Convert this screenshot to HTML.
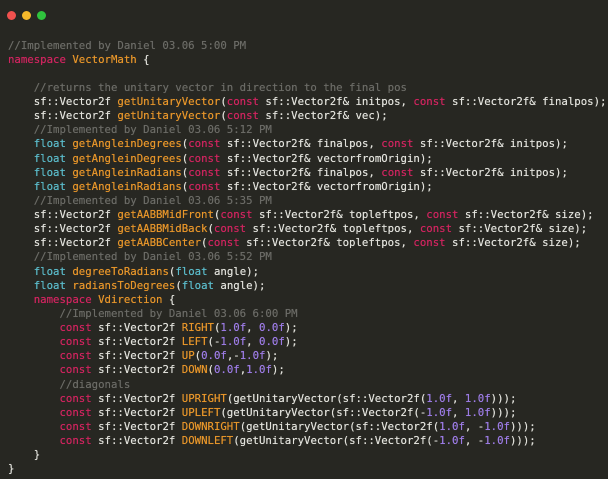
<!DOCTYPE html>
<html><head><meta charset="utf-8"><style>
html,body{margin:0;padding:0;width:608px;height:479px;overflow:hidden;background:#272722;}
.dot{position:absolute;top:10.5px;width:9px;height:9px;border-radius:50%;}
pre{position:absolute;left:8px;top:38.5px;margin:0;font-family:"DejaVu Sans Mono",monospace;font-size:10.7px;line-height:14.13px;color:#e2e2dc;white-space:pre;text-shadow:0 0 0.4px currentColor;}
.c{color:#6b6b66}.k{color:#d0245f}.f{color:#e8962a}.t{color:#5bbccb}.n{color:#9d7ce6}
</style></head><body>
<div class="dot" style="left:6.5px;background:#f0514e"></div>
<div class="dot" style="left:21.5px;background:#f6b92b"></div>
<div class="dot" style="left:36.5px;background:#2fc23d"></div>
<pre><span class="c">//Implemented by Daniel 03.06 5:00 PM</span>
<span class="k">namespace</span> <span class="f">VectorMath</span> {

    <span class="c">//returns the unitary vector in direction to the final pos</span>
    sf::Vector2f <span class="f">getUnitaryVector</span>(<span class="k">const</span> sf::Vector2f&amp; initpos, <span class="k">const</span> sf::Vector2f&amp; finalpos);
    sf::Vector2f <span class="f">getUnitaryVector</span>(<span class="k">const</span> sf::Vector2f&amp; vec);
    <span class="c">//Implemented by Daniel 03.06 5:12 PM</span>
    <span class="t">float</span> <span class="f">getAngleinDegrees</span>(<span class="k">const</span> sf::Vector2f&amp; finalpos, <span class="k">const</span> sf::Vector2f&amp; initpos);
    <span class="t">float</span> <span class="f">getAngleinDegrees</span>(<span class="k">const</span> sf::Vector2f&amp; vectorfromOrigin);
    <span class="t">float</span> <span class="f">getAngleinRadians</span>(<span class="k">const</span> sf::Vector2f&amp; finalpos, <span class="k">const</span> sf::Vector2f&amp; initpos);
    <span class="t">float</span> <span class="f">getAngleinRadians</span>(<span class="k">const</span> sf::Vector2f&amp; vectorfromOrigin);
    <span class="c">//Implemented by Daniel 03.06 5:35 PM</span>
    sf::Vector2f <span class="f">getAABBMidFront</span>(<span class="k">const</span> sf::Vector2f&amp; topleftpos, <span class="k">const</span> sf::Vector2f&amp; size);
    sf::Vector2f <span class="f">getAABBMidBack</span>(<span class="k">const</span> sf::Vector2f&amp; topleftpos, <span class="k">const</span> sf::Vector2f&amp; size);
    sf::Vector2f <span class="f">getAABBCenter</span>(<span class="k">const</span> sf::Vector2f&amp; topleftpos, <span class="k">const</span> sf::Vector2f&amp; size);
    <span class="c">//Implemented by Daniel 03.06 5:52 PM</span>
    <span class="t">float</span> <span class="f">degreeToRadians</span>(<span class="t">float</span> angle);
    <span class="t">float</span> <span class="f">radiansToDegrees</span>(<span class="t">float</span> angle);
    <span class="k">namespace</span> <span class="f">Vdirection</span> {
        <span class="c">//Implemented by Daniel 03.06 6:00 PM</span>
        <span class="k">const</span> sf::Vector2f <span class="f">RIGHT</span>(<span class="n">1.0f</span>, <span class="n">0.0f</span>);
        <span class="k">const</span> sf::Vector2f <span class="f">LEFT</span>(-<span class="n">1.0f</span>, <span class="n">0.0f</span>);
        <span class="k">const</span> sf::Vector2f <span class="f">UP</span>(<span class="n">0.0f</span>,-<span class="n">1.0f</span>);
        <span class="k">const</span> sf::Vector2f <span class="f">DOWN</span>(<span class="n">0.0f</span>,<span class="n">1.0f</span>);
        <span class="c">//diagonals</span>
        <span class="k">const</span> sf::Vector2f <span class="f">UPRIGHT</span>(getUnitaryVector(sf::Vector2f(<span class="n">1.0f</span>, <span class="n">1.0f</span>)));
        <span class="k">const</span> sf::Vector2f <span class="f">UPLEFT</span>(getUnitaryVector(sf::Vector2f(-<span class="n">1.0f</span>, <span class="n">1.0f</span>)));
        <span class="k">const</span> sf::Vector2f <span class="f">DOWNRIGHT</span>(getUnitaryVector(sf::Vector2f(<span class="n">1.0f</span>, -<span class="n">1.0f</span>)));
        <span class="k">const</span> sf::Vector2f <span class="f">DOWNLEFT</span>(getUnitaryVector(sf::Vector2f(-<span class="n">1.0f</span>, -<span class="n">1.0f</span>)));
    }
}</pre>
</body></html>
